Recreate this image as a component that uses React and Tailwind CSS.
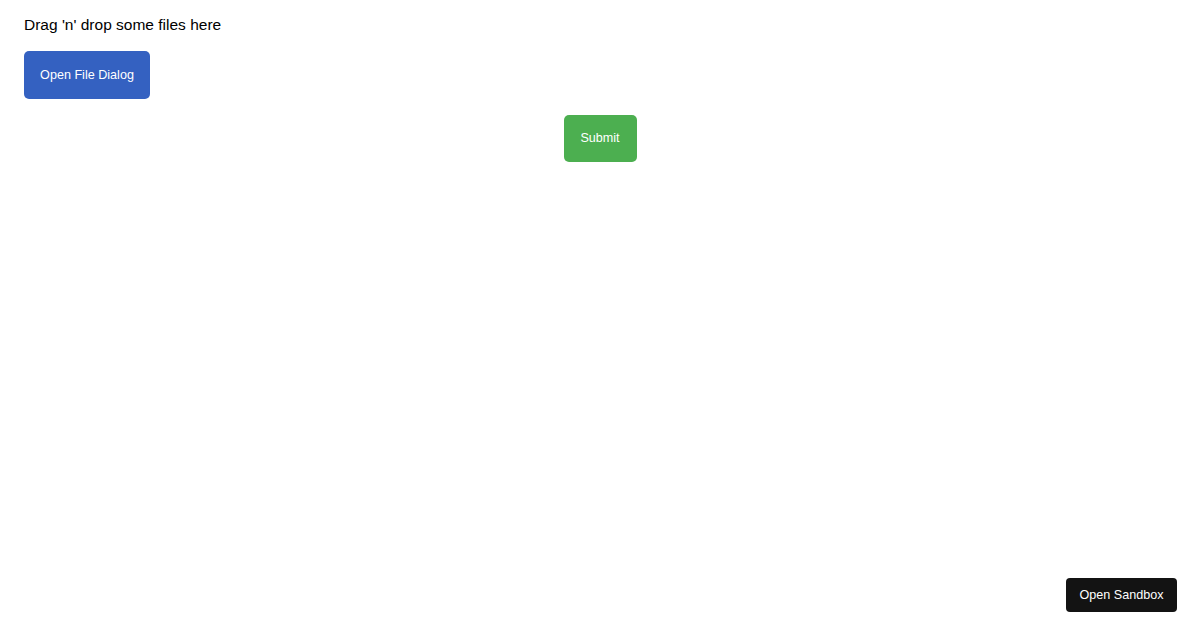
export default function App() {
  return (
    <div className="relative h-[630px] w-full bg-white font-['Liberation_Sans',Arial,sans-serif] text-black">
      <div className="flex flex-col px-6 pt-[13px]">
        <p className="text-[15.5px] leading-6">Drag 'n' drop some files here</p>
        <div className="mt-[14px]">
          <button type="button" className="h-12 w-[126px] rounded-[5px] bg-[#3461c1] text-[12.6px] text-white">
            Open File Dialog
          </button>
        </div>
        <div className="mt-4 flex justify-center">
          <button type="button" className="h-[47px] w-[73px] rounded-[5px] bg-[#4caf50] text-[12.6px] text-white">
            Submit
          </button>
        </div>
      </div>
      <button
        type="button"
        className="absolute bottom-[18px] right-[23px] h-[34px] w-[111px] rounded-[4px] bg-[#131313] text-[12.6px] text-white"
      >
        Open Sandbox
      </button>
    </div>
  );
}
